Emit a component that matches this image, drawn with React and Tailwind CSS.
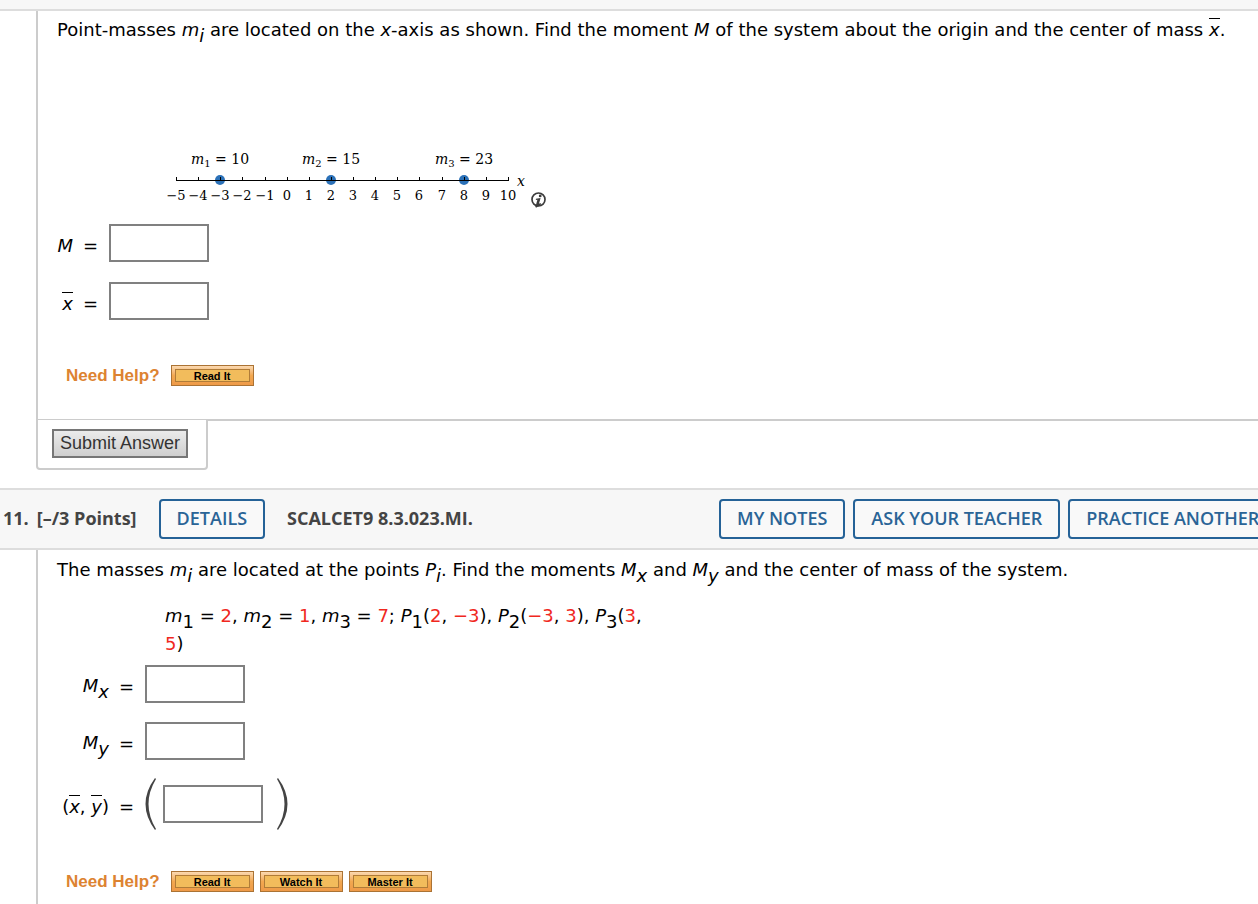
import React, { useState } from 'react';

const Sub = ({ children }) => <sub className="static text-[18px] leading-none align-[-6px]">{children}</sub>;

const Bar = ({ children }) => <i className="inline-block border-t border-black leading-[21px]">{children}</i>;

const Red = ({ children }) => <span className="text-[#f0281e]">{children}</span>;

const masses = [
    { n: 1, at: -3, value: 10 },
    { n: 2, at: 2, value: 15 },
    { n: 3, at: 8, value: 23 },
];

const NumberLine = () => {
    const ticks = Array.from({ length: 16 }, (_, i) => i - 5);
    const pos = (v) => Math.round(12 + (v + 5) * 22.13);
    return (
        <svg width="364" height="60" viewBox="0 0 364 60" role="img" aria-label="Masses on the x-axis" className="font-['DejaVu_Serif',serif] text-[13px]">
            {masses.map((m) => (
                <text key={m.n} x={pos(m.at)} y="14" textAnchor="middle" fontSize="14">
                    <tspan fontStyle="italic">m</tspan><tspan dy="3" fontSize="10">{m.n}</tspan><tspan dy="-3"> = {m.value}</tspan>
                </text>
            ))}
            {masses.map((m) => <circle key={m.n} cx={pos(m.at)} cy="30" r="5" fill="#2b71b8" />)}
            <path d="M12 30.5H345" stroke="black" />
            {ticks.map((t) => <path key={t} d={`M${pos(t) + 0.5} 27V30`} stroke="black" />)}
            {ticks.map((t) => (
                <text key={t} x={pos(t)} y="50" textAnchor="middle">{t < 0 ? `−${-t}` : t}</text>
            ))}
            <text x="353" y="36" fontStyle="italic" fontSize="14">x</text>
        </svg>
    );
};

const InfoIcon = () => (
    <svg width="16" height="18" viewBox="0 0 16 18">
        <circle cx="7.5" cy="7.5" r="6.5" fill="none" stroke="#3c3c3c" strokeWidth="1.7" />
        <circle cx="9.2" cy="3.9" r="1.4" fill="#3c3c3c" />
        <path d="M5 6.7L9.6 6L8 11.6L10.2 11.2L9.6 13L5 15.8L3.6 13L5.1 12.4L6.4 7.8L4.8 8Z" fill="#3c3c3c" />
    </svg>
);

const Answer = ({ id, label, paren }) => {
    const [value, setValue] = useState('');
    return (
        <>
            <label htmlFor={id} className="pt-1.5 text-right whitespace-nowrap">{label}</label>
            <span className="pt-1.5">=</span>
            <div className="flex items-center">
                {paren && <svg width="18" height="54" viewBox="0 0 18 54" fill="#444" className="-my-0.5"><path d="M10 1Q-9 27 10 53L11 52Q-4 27 11 2Z" /></svg>}
                <input id={id} type="text" value={value} onChange={(e) => setValue(e.target.value)} className="w-[100px] h-[38px] border-2 border-[#808080] bg-white px-2" />
                {paren && <svg width="26" height="54" viewBox="0 0 26 54" fill="#444" className="-my-0.5"><path d="M15 1Q34 27 15 53L14 52Q29 27 14 2Z" /></svg>}
            </div>
        </>
    );
};

const NeedHelp = ({ items }) => (
    <div className="flex items-center pl-2 font-['Liberation_Sans',sans-serif]">
        <span className="mr-[11px] text-[17px] leading-5 font-bold text-[#dd8331]">Need Help?</span>
        <div className="flex gap-1.5">
            {items.map((item) => (
                <button key={item} className="w-[83px] h-[21px] p-[3px] border border-[#ab7334] bg-linear-to-b from-[#fbd9b0] via-[#f2a850] to-[#ee9a48]">
                    <span className="flex h-full items-center justify-center border border-[#b07c38] bg-[#f2bc5c] pt-px text-[11px] leading-none font-bold text-black">{item}</span>
                </button>
            ))}
        </div>
    </div>
);

const HeaderButton = ({ children }) => (
    <button className="h-10 shrink-0 whitespace-nowrap rounded-[4px] border-2 border-[#256297] bg-[#f9f9f9] px-4 pb-0.5 text-[18px] font-semibold text-[#2a6496]">{children}</button>
);

const App = () => {
    return (
        <div className="min-h-screen overflow-hidden bg-white font-['DejaVu_Sans',sans-serif] text-[18px] leading-[26px] text-black">
            <div className="h-[11px] border-b-2 border-[#ddd] bg-[#f7f7f7]" />

            <section className="ml-9">
                <div className="border-l-2 border-[#ccc] pl-[19px] pt-1.5 pb-[33px]">
                    <p className="whitespace-nowrap">
                        Point-masses <i>m<Sub>i</Sub></i> are located on the <i>x</i>-axis as shown. Find the moment <i>M</i> of the system about the origin and the center of mass <Bar>x</Bar>.
                    </p>
                    <div className="mt-[105px] ml-[107px] flex items-end">
                        <NumberLine />
                        <a href="#details" aria-label="Image description" className="ml-[3px]"><InfoIcon /></a>
                    </div>
                    <div className="mt-3.5 grid w-fit grid-cols-[16px_16px_auto] items-center gap-x-[10px] gap-y-5">
                        <Answer id="moment" label={<i>M</i>} />
                        <Answer id="xbar" label={<Bar>x</Bar>} />
                    </div>
                    <div className="mt-[45px] ml-px"><NeedHelp items={['Read It']} /></div>
                </div>
                <div className="flex items-start">
                    <div className="border-2 border-t border-[#ccc] rounded-b-[4px] pl-3.5 pr-[18px] pt-[9px] pb-[10px]">
                        <button className="block h-[29px] border-2 border-[#767676] bg-linear-to-b from-[#ebebeb] to-[#cfcfcf] px-1.5 font-['Liberation_Sans',sans-serif] text-[18px] leading-[23px] text-[#333]">Submit Answer</button>
                    </div>
                    <div className="flex-1 border-t-2 border-[#ccc]" />
                </div>
            </section>

            <header className="mt-[18px] flex h-[62px] items-center border-y-2 border-[#ddd] bg-[#f7f7f7] pl-[3px] font-['Open_Sans',sans-serif] text-[18px] font-bold text-[#444]">
                <span className="mr-2 shrink-0 pb-0.5">11.</span>
                <span className="mr-[22px] shrink-0 pb-0.5">[–/3 Points]</span>
                <HeaderButton>DETAILS</HeaderButton>
                <span className="ml-[22px] w-[432px] shrink-0 pb-0.5">SCALCET9 8.3.023.MI.</span>
                <div className="flex gap-2">
                    <HeaderButton>MY NOTES</HeaderButton>
                    <HeaderButton>ASK YOUR TEACHER</HeaderButton>
                    <HeaderButton>PRACTICE ANOTHER</HeaderButton>
                </div>
            </header>

            <section className="ml-9 border-l-2 border-[#ccc] pl-[19px] pt-[7px] pb-8">
                <p>
                    The masses <i>m<Sub>i</Sub></i> are located at the points <i>P<Sub>i</Sub></i>. Find the moments <i>M<Sub>x</Sub></i> and <i>M<Sub>y</Sub></i> and the center of mass of the system.
                </p>
                <p className="mt-[18px] ml-[108px] w-[495px]">
                    <i>m</i><Sub>1</Sub> = <Red>2</Red>, <i>m</i><Sub>2</Sub> = <Red>1</Red>, <i>m</i><Sub>3</Sub> = <Red>7</Red>; <i>P</i><Sub>1</Sub>(<Red>2</Red>, <Red>−3</Red>), <i>P</i><Sub>2</Sub>(<Red>−3</Red>, <Red>3</Red>), <i>P</i><Sub>3</Sub>(<Red>3</Red>, <Red>5</Red>)
                </p>
                <div className="mt-2 grid w-fit grid-cols-[52px_16px_auto] items-center gap-x-[10px] gap-y-[19px]">
                    <Answer id="mx" label={<i>M<Sub>x</Sub></i>} />
                    <Answer id="my" label={<i>M<Sub>y</Sub></i>} />
                    <Answer id="center" label={<>(<Bar>x</Bar>, <Bar>y</Bar>)</>} paren />
                </div>
                <div className="mt-[42px] ml-px"><NeedHelp items={['Read It', 'Watch It', 'Master It']} /></div>
            </section>
        </div>
    );
};
export default App;
